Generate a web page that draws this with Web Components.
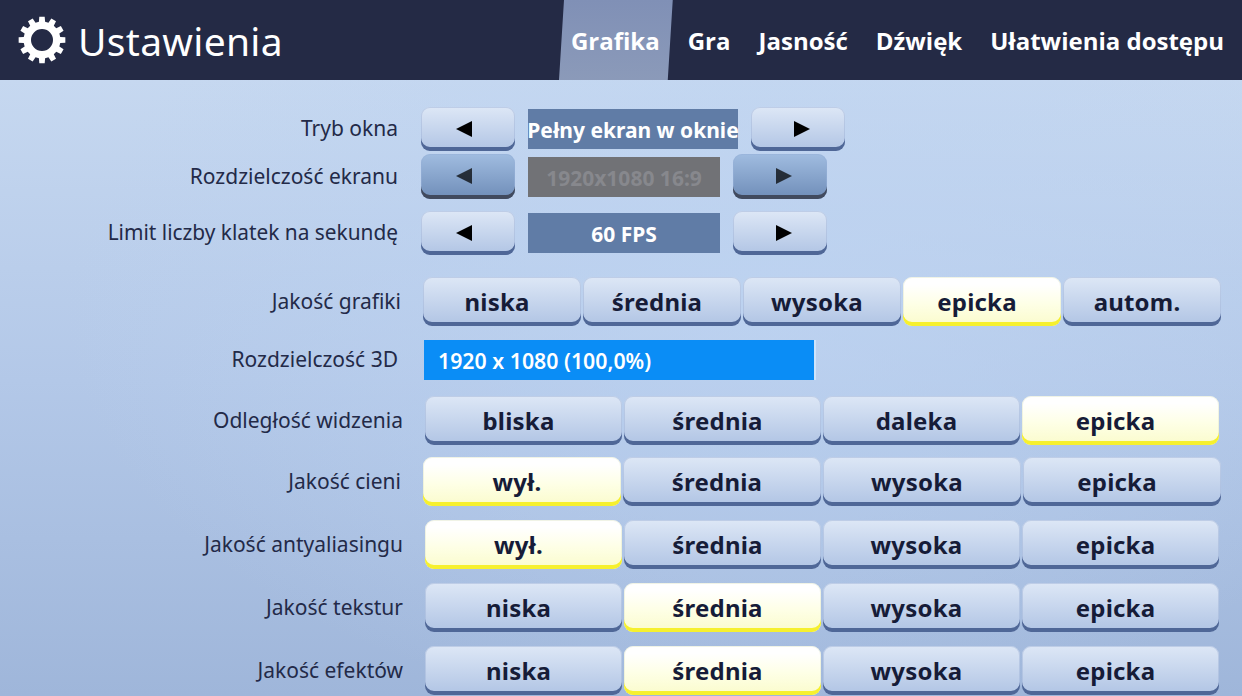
<!DOCTYPE html>
<html lang="pl">
<head>
<meta charset="utf-8">
<title>Ustawienia</title>
<style>
  html, body { margin: 0; height: 100%; overflow: hidden; }
  body {
    width: 1242px;
    height: 696px;
    font-family: "Noto Sans", sans-serif;
    background:
      radial-gradient(700px 420px at 760px 300px, rgba(190,212,242,.75), rgba(190,212,242,0)),
      linear-gradient(180deg, #c6d8f0 80px, #b3c8e8 380px, #9fb6da 696px);
  }
</style>
</head>
<body>
<template id="tpl-header">
  <style>
    :host { display: flex; height: 80px; background: #242a45; align-items: center; color: #fff; padding: 0 18px; box-sizing: border-box; }
    svg { width: 48px; height: 48px; flex: none; }
    h1 { margin: 0 0 0 12px; font: 400 39px/1 "Noto Sans", sans-serif; letter-spacing: .3px; flex: 1; }
    nav { display: flex; align-items: stretch; height: 80px; gap: 28px; font: 700 24px/82px "Open Sans", sans-serif; isolation: isolate; }
    span { position: relative; white-space: nowrap; }
    .on::before { content: ""; position: absolute; z-index: -1; left: -12px; right: -13px; top: 0; bottom: 0;
      background: linear-gradient(180deg, #8090b6, #8b9ab9); clip-path: polygon(5px 0, 100% 0, calc(100% - 5px) 100%, 0 100%); }
  </style>
  <svg viewBox="0 0 48 48"><path id="gear" fill="#fff" fill-rule="evenodd"/></svg>
  <h1><slot name="title"></slot></h1>
  <nav id="tabs"></nav>
</template>

<template id="tpl-row">
  <style>
    :host { display: flex; align-items: flex-start; color: #1d2340; }
    .label { flex: none; box-sizing: border-box; text-align: right; font: 400 var(--label-size, 21px)/27px "Noto Sans", sans-serif; white-space: nowrap; color: #232a48; }
    .body { flex: none; display: flex; }
  </style>
  <div class="label" part="label"><slot name="label"></slot></div>
  <div class="body"><slot></slot></div>
</template>

<template id="tpl-button">
  <style>
    :host { display: flex; align-items: center; justify-content: center; box-sizing: border-box; flex: none;
      height: 49px; padding: 1px 10px 0 0; border-radius: 9px;
      font: 700 24px/1 "Noto Sans", sans-serif; color: #161c38; letter-spacing: .2px;
      background: linear-gradient(180deg, #dde7f6 0, #b0c4e4 100%);
      box-shadow: inset 0 -4px 0 #4f6797, inset 0 0 0 1px rgba(160,180,215,.5); }
    :host([selected]) {
      background: linear-gradient(180deg, #ffffff 0, #ffffff 15%, #feffe6 55%, #fbfcd0 92%);
      box-shadow: inset 0 -4px 0 #f6f02e, inset 0 0 0 1px rgba(225,232,205,.5); }
  </style>
  <slot></slot>
</template>

<template id="tpl-arrow">
  <style>
    :host { display: flex; align-items: center; box-sizing: border-box; flex: none;
      width: 94px; height: 44px; padding-bottom: 1px; border-radius: 9px;
      background: linear-gradient(180deg, #dde7f6 0, #b0c4e4 100%);
      box-shadow: inset 0 -4px 0 #4f6797, inset 0 0 0 1px rgba(160,180,215,.5); }
    :host([dir="left"]) { justify-content: flex-start; padding-left: 35px; }
    :host([dir="right"]) { justify-content: flex-end; padding-right: 35px; }
    :host([disabled]) {
      height: 45px;
      background: linear-gradient(180deg, #a0bce0 0, #6f8db8 100%);
      box-shadow: inset 0 -4px 0 #414a5e, inset 0 0 0 1px rgba(150,175,215,.5); }
    svg { width: 16px; height: 16px; display: block; }
    :host([disabled]) svg { opacity: .72; }
  </style>
  <svg viewBox="0 0 16 16"><polygon id="tri" fill="#000"/></svg>
</template>

<template id="tpl-value">
  <style>
    :host { display: flex; align-items: center; justify-content: center; box-sizing: border-box; flex: none;
      height: 40px; margin: 2px 13px 0; background: #607ca6; color: #fff; white-space: nowrap;
      font: 700 21px/1 "Noto Sans", sans-serif; padding-top: 3px; }
    :host([disabled]) { background: #717276; color: #87888d; margin-top: 3px; }
  </style>
  <slot></slot>
</template>

<template id="tpl-slider">
  <style>
    :host { display: flex; box-sizing: border-box; height: 40px; align-items: center; padding-left: 14px; padding-top: 2px;
      background: #0a8df6; border-right: 2px solid #cfe4fb; color: #fff; font: 600 21.3px/1 "Noto Sans", sans-serif; white-space: nowrap; }
  </style>
  <slot></slot>
</template>

<settings-header>
  <span slot="title">Ustawienia</span>
</settings-header>

<settings-list>
  <settings-row label-width="398" label-top="8" body-left="23" style="margin-top:27px">
    <span slot="label">Tryb okna</span>
    <arrow-button dir="left"></arrow-button>
    <value-box style="width:210px">Pełny ekran w oknie</value-box>
    <arrow-button dir="right"></arrow-button>
  </settings-row>
  <settings-row label-width="398" label-top="9" body-left="23" style="margin-top:3px">
    <span slot="label">Rozdzielczość ekranu</span>
    <arrow-button dir="left" disabled></arrow-button>
    <value-box style="width:192px" disabled>1920x1080 16:9</value-box>
    <arrow-button dir="right" disabled></arrow-button>
  </settings-row>
  <settings-row label-width="398" label-top="8" body-left="23" style="margin-top:12px; --label-size:20.85px">
    <span slot="label">Limit liczby klatek na sekundę</span>
    <arrow-button dir="left"></arrow-button>
    <value-box style="width:192px">60 FPS</value-box>
    <arrow-button dir="right"></arrow-button>
  </settings-row>
  <settings-row label-width="401" label-top="11" body-left="22" style="margin-top:22px" options="niska,średnia,wysoka,epicka,autom." selected="3" button-width="158" gap="2">
    <span slot="label">Jakość grafiki</span>
  </settings-row>
  <settings-row label-width="398" label-top="6" body-left="26" style="margin-top:14px">
    <span slot="label">Rozdzielczość 3D</span>
    <slider-bar style="width:392px">1920 x 1080 (100,0%)</slider-bar>
  </settings-row>
  <settings-row label-width="403" label-top="11" body-left="22" style="margin-top:16px" options="bliska,średnia,daleka,epicka" selected="3" button-width="197" gap="2">
    <span slot="label">Odległość widzenia</span>
  </settings-row>
  <settings-row label-width="401" label-top="11" body-left="22" style="margin-top:12px" options="wył.,średnia,wysoka,epicka" selected="0" button-width="198" gap="2">
    <span slot="label">Jakość cieni</span>
  </settings-row>
  <settings-row label-width="403" label-top="11" body-left="22" style="margin-top:14px" options="wył.,średnia,wysoka,epicka" selected="0" button-width="197" gap="2">
    <span slot="label">Jakość antyaliasingu</span>
  </settings-row>
  <settings-row label-width="403" label-top="11" body-left="22" style="margin-top:14px" options="niska,średnia,wysoka,epicka" selected="1" button-width="197" gap="2">
    <span slot="label">Jakość tekstur</span>
  </settings-row>
  <settings-row label-width="403" label-top="11" body-left="22" style="margin-top:14px" options="niska,średnia,wysoka,epicka" selected="1" button-width="197" gap="2">
    <span slot="label">Jakość efektów</span>
  </settings-row>
</settings-list>

<script>
function stamp(host, id) {
  const root = host.attachShadow({ mode: 'open' });
  root.appendChild(document.getElementById(id).content.cloneNode(true));
  return root;
}

function gearPath(cx, cy, teeth, outer, root, hole) {
  const pts = [];
  const step = Math.PI * 2 / teeth;
  for (let i = 0; i < teeth; i++) {
    const a = i * step - Math.PI / 2;
    const corners = [[-.32, root], [-.22, outer], [.22, outer], [.32, root]];
    corners.forEach(([k, r]) => {
      pts.push((cx + Math.cos(a + k * step) * r).toFixed(2) + ' ' + (cy + Math.sin(a + k * step) * r).toFixed(2));
    });
  }
  return 'M' + pts.join('L') + 'Z' +
    `M${cx - hole} ${cy}a${hole} ${hole} 0 1 0 ${hole * 2} 0a${hole} ${hole} 0 1 0 ${-hole * 2} 0Z`;
}

class SettingsHeader extends HTMLElement {
  connectedCallback() {
    const root = stamp(this, 'tpl-header');
    root.getElementById('gear').setAttribute('d', gearPath(24, 24, 12, 23.5, 18.5, 11));
    const tabs = ['Grafika', 'Gra', 'Jasność', 'Dźwięk', 'Ułatwienia dostępu'];
    root.getElementById('tabs').innerHTML = tabs
      .map((t, i) => `<span class="${i === 0 ? 'on' : ''}">${t}</span>`).join('');
  }
}

class SettingsList extends HTMLElement {
  connectedCallback() {
    this.style.display = 'block';
    this.style.overflow = 'hidden';
    this.style.height = '616px';
    this.attachShadow({ mode: 'open' }).innerHTML = '<slot></slot>';
  }
}

class SettingsRow extends HTMLElement {
  connectedCallback() {
    const root = stamp(this, 'tpl-row');
    const label = root.querySelector('.label');
    const body = root.querySelector('.body');
    label.style.width = this.getAttribute('label-width') + 'px';
    label.style.paddingTop = this.getAttribute('label-top') + 'px';
    body.style.marginLeft = this.getAttribute('body-left') + 'px';
    const options = this.getAttribute('options');
    if (!options) return;
    body.style.gap = this.getAttribute('gap') + 'px';
    const selected = Number(this.getAttribute('selected'));
    options.split(',').forEach((text, i) => {
      const b = document.createElement('option-button');
      b.textContent = text;
      b.style.width = this.getAttribute('button-width') + 'px';
      if (i === selected) b.setAttribute('selected', '');
      this.appendChild(b);
    });
  }
}

class OptionButton extends HTMLElement {
  connectedCallback() { stamp(this, 'tpl-button'); }
}

class ArrowButton extends HTMLElement {
  connectedCallback() {
    const root = stamp(this, 'tpl-arrow');
    const left = this.getAttribute('dir') === 'left';
    root.getElementById('tri').setAttribute('points', left ? '0,8 16,0 16,16' : '16,8 0,0 0,16');
  }
}

class ValueBox extends HTMLElement {
  connectedCallback() { stamp(this, 'tpl-value'); }
}

class SliderBar extends HTMLElement {
  connectedCallback() { stamp(this, 'tpl-slider'); }
}

customElements.define('settings-header', SettingsHeader);
customElements.define('settings-list', SettingsList);
customElements.define('settings-row', SettingsRow);
customElements.define('option-button', OptionButton);
customElements.define('arrow-button', ArrowButton);
customElements.define('value-box', ValueBox);
customElements.define('slider-bar', SliderBar);
</script>
</body>
</html>
